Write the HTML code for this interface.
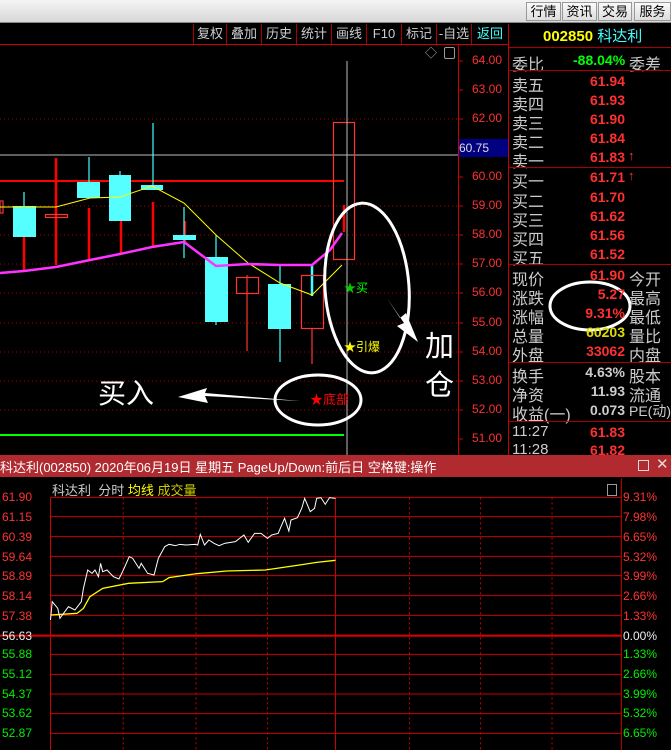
<!DOCTYPE html>
<html><head><meta charset="utf-8"><style>
*{margin:0;padding:0;box-sizing:border-box}
body{width:671px;height:750px;background:#000;position:relative;overflow:hidden;font-family:"Liberation Sans","Noto Sans CJK SC",sans-serif;}
.a{position:absolute;white-space:nowrap}
.top{left:0;top:0;width:671px;height:23px;background:linear-gradient(#f4f4f4,#d8d8d8);border-bottom:1px solid #888}
.tb{top:2px;height:19px;border:1px solid #999;background:linear-gradient(#fafafa,#ddd);font-size:13px;color:#000;text-align:center;line-height:17px}
.tool{font-size:13px;color:#ccc;top:24px;height:20px;line-height:20px;text-align:center;border-right:1px solid #a00}
.rp{font-size:16px;color:#ccc;left:512px}
.rv{font-size:14px;font-weight:bold;color:#ff3030;text-align:right;width:110px;left:515px;font-family:"Liberation Sans Narrow","Liberation Sans",sans-serif}
.yl{font-size:12px;color:#ff3030;left:472px}
.hl{height:1px;background:#a00;left:509px;width:162px}
.bl{font-size:12px;left:2px;width:44px;text-align:left}
.br{font-size:12px;left:623px}
</style></head><body>
<div class="a top"></div>
<div class="a tb" style="left:526px;width:35px">行情</div>
<div class="a tb" style="left:562px;width:35px">资讯</div>
<div class="a tb" style="left:598px;width:34px">交易</div>
<div class="a tb" style="left:634px;width:37px">服务</div>
<div class="a" style="left:0;top:44px;width:509px;height:1px;background:#c00"></div>
<div class="a" style="left:193px;top:24px;width:1px;height:20px;background:#a00"></div>
<div class="a tool" style="left:194px;width:33px">复权</div>
<div class="a tool" style="left:227px;width:35px">叠加</div>
<div class="a tool" style="left:262px;width:35px">历史</div>
<div class="a tool" style="left:297px;width:35px">统计</div>
<div class="a tool" style="left:332px;width:35px">画线</div>
<div class="a tool" style="left:367px;width:35px">F10</div>
<div class="a tool" style="left:402px;width:35px">标记</div>
<div class="a tool" style="left:437px;width:35px">-自选</div>
<div class="a tool" style="left:472px;width:37px;color:#4ff">返回</div>
<div class="a" style="left:508px;top:24px;width:1px;height:431px;background:#c00"></div>
<div class="a" style="left:458px;top:45px;width:1px;height:410px;background:#c00"></div>
<div class="a" style="left:425px;top:44px;color:#aaa;font-size:12px">◇</div>
<div class="a" style="left:444px;top:47px;width:11px;height:12px;border:1px solid #999;border-radius:2px"></div>

<svg class="a" style="left:0;top:0" width="671" height="455">
<g stroke="#a00" stroke-dasharray="1,3" stroke-width="1">
<line x1="0" y1="119" x2="458" y2="119"/><line x1="0" y1="206" x2="458" y2="206"/><line x1="0" y1="235" x2="458" y2="235"/><line x1="0" y1="264" x2="458" y2="264"/><line x1="0" y1="293" x2="458" y2="293"/><line x1="0" y1="323" x2="458" y2="323"/><line x1="0" y1="352" x2="458" y2="352"/><line x1="0" y1="381" x2="458" y2="381"/><line x1="0" y1="410" x2="458" y2="410"/>
</g>
<g stroke="#c00"><line x1="458" y1="61" x2="463" y2="61"/><line x1="458" y1="90" x2="463" y2="90"/><line x1="458" y1="119" x2="463" y2="119"/><line x1="458" y1="177" x2="463" y2="177"/><line x1="458" y1="206" x2="463" y2="206"/><line x1="458" y1="235" x2="463" y2="235"/><line x1="458" y1="264" x2="463" y2="264"/><line x1="458" y1="293" x2="463" y2="293"/><line x1="458" y1="323" x2="463" y2="323"/><line x1="458" y1="352" x2="463" y2="352"/><line x1="458" y1="381" x2="463" y2="381"/><line x1="458" y1="410" x2="463" y2="410"/><line x1="458" y1="439" x2="463" y2="439"/></g>
<line x1="0" y1="155" x2="458" y2="155" stroke="#bbb"/>
<line x1="0" y1="181" x2="344" y2="181" stroke="#f00" stroke-width="2"/>
<line x1="0" y1="435" x2="344" y2="435" stroke="#0f0" stroke-width="2"/>
<g stroke="#f00" stroke-width="2.5">
<line x1="24" y1="222" x2="24" y2="270"/><line x1="56" y1="158" x2="56" y2="265"/><line x1="89" y1="208" x2="89" y2="259"/><line x1="121" y1="215" x2="121" y2="253"/><line x1="153" y1="202" x2="153" y2="247"/><line x1="185" y1="221" x2="185" y2="242"/><line x1="344" y1="205" x2="344" y2="232"/>
</g>
<g stroke="#4ff" stroke-width="1.2">
<line x1="24" y1="192" x2="24" y2="206"/><line x1="89" y1="157" x2="89" y2="182"/><line x1="120" y1="171" x2="120" y2="175"/><line x1="153" y1="123" x2="153" y2="185"/><line x1="184" y1="207" x2="184" y2="258"/><line x1="216" y1="235" x2="216" y2="325"/><line x1="280" y1="265" x2="280" y2="362"/>
</g>
<g stroke="#f33" stroke-width="1.2"><line x1="247" y1="275" x2="247" y2="351"/><line x1="312" y1="328" x2="312" y2="364"/></g>
<line x1="312" y1="265" x2="312" y2="296" stroke="#4ff" stroke-width="2.5"/>
<g fill="#5ff">
<rect x="13" y="206" width="23" height="31"/><rect x="77" y="182" width="23" height="16"/><rect x="109" y="175" width="22" height="46"/><rect x="141" y="185" width="22" height="5"/><rect x="173" y="235" width="23" height="5"/><rect x="205" y="257" width="23" height="65"/><rect x="268" y="284" width="23" height="45"/>
</g>
<g fill="none" stroke="#f33" stroke-width="1.2">
<rect x="0" y="201" width="3" height="12"/><rect x="45.5" y="214.5" width="22" height="3"/><rect x="236.5" y="277.5" width="22" height="16"/><rect x="301.5" y="275.5" width="22" height="53"/><rect x="333.5" y="122.5" width="21" height="137"/>
</g>
<line x1="347" y1="61" x2="347" y2="455" stroke="#bbb"/>
<polyline fill="none" stroke="#ff0" stroke-width="1" points="0,207 56,207 90,198 120,197 152,186 184,203 216,235 248,263 280,283 312,295 342,265"/>
<polyline fill="none" stroke="#f3f" stroke-width="2.5" points="0,273 24,271 56,267 90,260 120,254 152,247 184,242 216,266 248,264 280,265 312,265 330,250 342,233"/>
<g fill="none" stroke="#fff" stroke-width="3">
<ellipse cx="367" cy="288" rx="42" ry="85" transform="rotate(-4 367 288)"/>
<ellipse cx="590" cy="306" rx="40" ry="24"/>
<ellipse cx="318" cy="400" rx="43" ry="25"/>
</g>
<polygon fill="#fff" points="387,298 400,318 406,313 418,342 397,326 404,323"/>
<polygon fill="#fff" points="300,401 205,396 208,403 178,397 207,388 205,393"/>
<text x="344" y="292" fill="#0c0" font-size="12">★<tspan fill="#0f0">买</tspan></text>
<text x="344" y="351" fill="#ff0" font-size="12">★引爆</text>
<text x="310" y="404" fill="#f00" font-size="13">★底部</text>
<text x="425" y="356" fill="#fff" font-size="29">加</text>
<text x="425" y="395" fill="#fff" font-size="29">仓</text>
<text x="98" y="403" fill="#fff" font-size="28">买入</text>
</svg>
<div class="a yl" style="top:53px">64.00</div><div class="a yl" style="top:82px">63.00</div><div class="a yl" style="top:111px">62.00</div>
<div class="a" style="left:459px;top:139px;width:49px;height:18px;background:#000080;color:#ddd;font-size:12px;line-height:18px">60.75</div>
<div class="a yl" style="top:169px">60.00</div><div class="a yl" style="top:198px">59.00</div><div class="a yl" style="top:227px">58.00</div><div class="a yl" style="top:256px">57.00</div><div class="a yl" style="top:285px">56.00</div><div class="a yl" style="top:315px">55.00</div><div class="a yl" style="top:344px">54.00</div><div class="a yl" style="top:373px">53.00</div><div class="a yl" style="top:402px">52.00</div><div class="a yl" style="top:431px">51.00</div>

<!-- right panel -->
<div class="a" style="left:543px;top:25px;font-size:15px;font-weight:bold;color:#ff0">002850 <span style="color:#4ff;font-weight:normal">科达利</span></div>
<div class="a hl" style="top:47px"></div>
<div class="a rp" style="top:51px">委比</div><div class="a" style="left:573px;top:52px;font-size:14px;font-weight:bold;color:#0f0">-88.04%</div><div class="a rp" style="left:629px;top:51px">委差</div>
<div class="a hl" style="top:70px"></div>
<div class="a rp" style="top:72px">卖五</div><div class="a rv" style="top:73px">61.94</div>
<div class="a rp" style="top:91px">卖四</div><div class="a rv" style="top:92px">61.93</div>
<div class="a rp" style="top:110px">卖三</div><div class="a rv" style="top:111px">61.90</div>
<div class="a rp" style="top:129px">卖二</div><div class="a rv" style="top:130px">61.84</div>
<div class="a rp" style="top:148px">卖一</div><div class="a rv" style="top:149px">61.83</div><div class="a" style="left:628px;top:148px;color:#f33;font-size:13px">↑</div>
<div class="a hl" style="top:167px"></div>
<div class="a rp" style="top:168px">买一</div><div class="a rv" style="top:169px">61.71</div><div class="a" style="left:628px;top:168px;color:#f33;font-size:13px">↑</div>
<div class="a rp" style="top:188px">买二</div><div class="a rv" style="top:189px">61.70</div>
<div class="a rp" style="top:207px">买三</div><div class="a rv" style="top:208px">61.62</div>
<div class="a rp" style="top:226px">买四</div><div class="a rv" style="top:227px">61.56</div>
<div class="a rp" style="top:245px">买五</div><div class="a rv" style="top:246px">61.52</div>
<div class="a hl" style="top:264px"></div>
<div class="a rp" style="top:266px">现价</div><div class="a rv" style="top:267px">61.90</div><div class="a rp" style="left:629px;top:266px">今开</div>
<div class="a rp" style="top:285px">涨跌</div><div class="a rv" style="top:286px">5.27</div><div class="a rp" style="left:629px;top:285px">最高</div>
<div class="a rp" style="top:304px">涨幅</div><div class="a rv" style="top:305px">9.31%</div><div class="a rp" style="left:629px;top:304px">最低</div>
<div class="a rp" style="top:323px">总量</div><div class="a rv" style="top:324px;color:#dd0">60203</div><div class="a rp" style="left:629px;top:323px">量比</div>
<div class="a rp" style="top:342px">外盘</div><div class="a rv" style="top:343px">33062</div><div class="a rp" style="left:629px;top:342px">内盘</div>
<div class="a hl" style="top:362px"></div>
<div class="a rp" style="top:363px">换手</div><div class="a rv" style="top:364px;color:#ccc">4.63%</div><div class="a rp" style="left:629px;top:363px">股本</div>
<div class="a rp" style="top:382px">净资</div><div class="a rv" style="top:383px;color:#ccc">11.93</div><div class="a rp" style="left:629px;top:382px">流通</div>
<div class="a rp" style="top:401px">收益(一)</div><div class="a rv" style="top:402px;color:#ccc">0.073</div><div class="a rp" style="left:629px;top:401px;font-size:14px">PE(动)</div>
<div class="a hl" style="top:421px"></div>
<div class="a rp" style="top:423px;font-size:15px">11:27</div><div class="a rv" style="top:424px">61.83</div>
<div class="a rp" style="top:441px;font-size:15px">11:28</div><div class="a rv" style="top:442px">61.82</div>

<!-- bottom -->
<div class="a" style="left:0;top:455px;width:671px;height:22px;background:#b02a30"></div>
<div class="a" style="left:0;top:457px;font-size:13px;color:#fff">科达利(002850) 2020年06月19日 星期五 PageUp/Down:前后日 空格键:操作</div>
<div class="a" style="left:638px;top:460px;width:11px;height:11px;border:1px solid #ddd"></div>
<div class="a" style="left:656px;top:455px;color:#ddd;font-size:15px">✕</div>
<div class="a" style="left:52px;top:480px;font-size:13px;color:#ccc">科达利 &nbsp;分时 <span style="color:#ff0">均线</span> <span style="color:#cc0">成交量</span></div>
<div class="a" style="left:607px;top:484px;width:10px;height:12px;border:1px solid #999"></div>
<svg class="a" style="left:0;top:455px" width="671" height="295" viewBox="0 0 1568 885" preserveAspectRatio="none">
<g stroke="#c00" stroke-width="1">
<line x1="118" y1="127" x2="1452" y2="127" vector-effect="non-scaling-stroke"/><line x1="118" y1="185" x2="1452" y2="185" vector-effect="non-scaling-stroke"/><line x1="118" y1="245" x2="1452" y2="245" vector-effect="non-scaling-stroke"/><line x1="118" y1="304" x2="1452" y2="304" vector-effect="non-scaling-stroke"/><line x1="118" y1="362" x2="1452" y2="362" vector-effect="non-scaling-stroke"/><line x1="118" y1="422" x2="1452" y2="422" vector-effect="non-scaling-stroke"/><line x1="118" y1="481" x2="1452" y2="481" vector-effect="non-scaling-stroke"/><line x1="118" y1="598" x2="1452" y2="598" vector-effect="non-scaling-stroke"/><line x1="118" y1="658" x2="1452" y2="658" vector-effect="non-scaling-stroke"/><line x1="118" y1="717" x2="1452" y2="717" vector-effect="non-scaling-stroke"/><line x1="118" y1="776" x2="1452" y2="776" vector-effect="non-scaling-stroke"/><line x1="118" y1="835" x2="1452" y2="835" vector-effect="non-scaling-stroke"/>
<line x1="118" y1="127" x2="118" y2="885" vector-effect="non-scaling-stroke"/><line x1="1452" y1="70" x2="1452" y2="885" vector-effect="non-scaling-stroke"/><line x1="784" y1="127" x2="784" y2="885" vector-effect="non-scaling-stroke"/>
</g>
<g stroke="#c00" stroke-dasharray="2,3">
<line x1="288" y1="127" x2="288" y2="885" vector-effect="non-scaling-stroke"/><line x1="458" y1="127" x2="458" y2="885" vector-effect="non-scaling-stroke"/><line x1="625" y1="127" x2="625" y2="885" vector-effect="non-scaling-stroke"/><line x1="957" y1="127" x2="957" y2="885" vector-effect="non-scaling-stroke"/><line x1="1123" y1="127" x2="1123" y2="885" vector-effect="non-scaling-stroke"/><line x1="1290" y1="127" x2="1290" y2="885" vector-effect="non-scaling-stroke"/>
</g>
<rect x="0" y="539" width="1452" height="6" fill="#d00"/>
<polyline fill="none" stroke="#ff0" stroke-width="1.3" vector-effect="non-scaling-stroke" points="118,480 180,475 195,460 210,425 240,400 300,385 380,380 395,368 460,356 530,348 620,345 700,330 740,322 784,316"/>
<polyline fill="none" stroke="#fff" stroke-width="1" vector-effect="non-scaling-stroke" points="118,495 122,440 135,460 140,490 160,455 175,465 190,440 195,400 205,345 215,355 222,345 230,365 235,325 240,350 250,345 265,365 278,372 290,340 302,305 310,310 325,340 330,325 345,355 360,360 370,310 385,275 395,268 410,272 420,268 435,270 455,268 462,270 468,238 478,270 488,255 500,265 512,272 525,265 550,260 570,240 580,262 595,235 610,235 625,250 635,240 650,235 665,190 675,228 680,195 695,188 705,160 712,130 725,170 735,160 740,130 750,128 760,148 770,128 784,130"/>
</svg>
<div class="a bl" style="top:490px;color:#f33">61.90</div><div class="a bl" style="top:510px;color:#f33">61.15</div><div class="a bl" style="top:530px;color:#f33">60.39</div><div class="a bl" style="top:550px;color:#f33">59.64</div><div class="a bl" style="top:569px;color:#f33">58.89</div><div class="a bl" style="top:589px;color:#f33">58.14</div><div class="a bl" style="top:609px;color:#f33">57.38</div><div class="a bl" style="top:629px;color:#eee">56.63</div><div class="a bl" style="top:647px;color:#0e0">55.88</div><div class="a bl" style="top:667px;color:#0e0">55.12</div><div class="a bl" style="top:687px;color:#0e0">54.37</div><div class="a bl" style="top:706px;color:#0e0">53.62</div><div class="a bl" style="top:726px;color:#0e0">52.87</div>
<div class="a br" style="top:490px;color:#f33">9.31%</div><div class="a br" style="top:510px;color:#f33">7.98%</div><div class="a br" style="top:530px;color:#f33">6.65%</div><div class="a br" style="top:550px;color:#f33">5.32%</div><div class="a br" style="top:569px;color:#f33">3.99%</div><div class="a br" style="top:589px;color:#f33">2.66%</div><div class="a br" style="top:609px;color:#f33">1.33%</div><div class="a br" style="top:629px;color:#eee">0.00%</div><div class="a br" style="top:647px;color:#0e0">1.33%</div><div class="a br" style="top:667px;color:#0e0">2.66%</div><div class="a br" style="top:687px;color:#0e0">3.99%</div><div class="a br" style="top:706px;color:#0e0">5.32%</div><div class="a br" style="top:726px;color:#0e0">6.65%</div>
</body></html>
